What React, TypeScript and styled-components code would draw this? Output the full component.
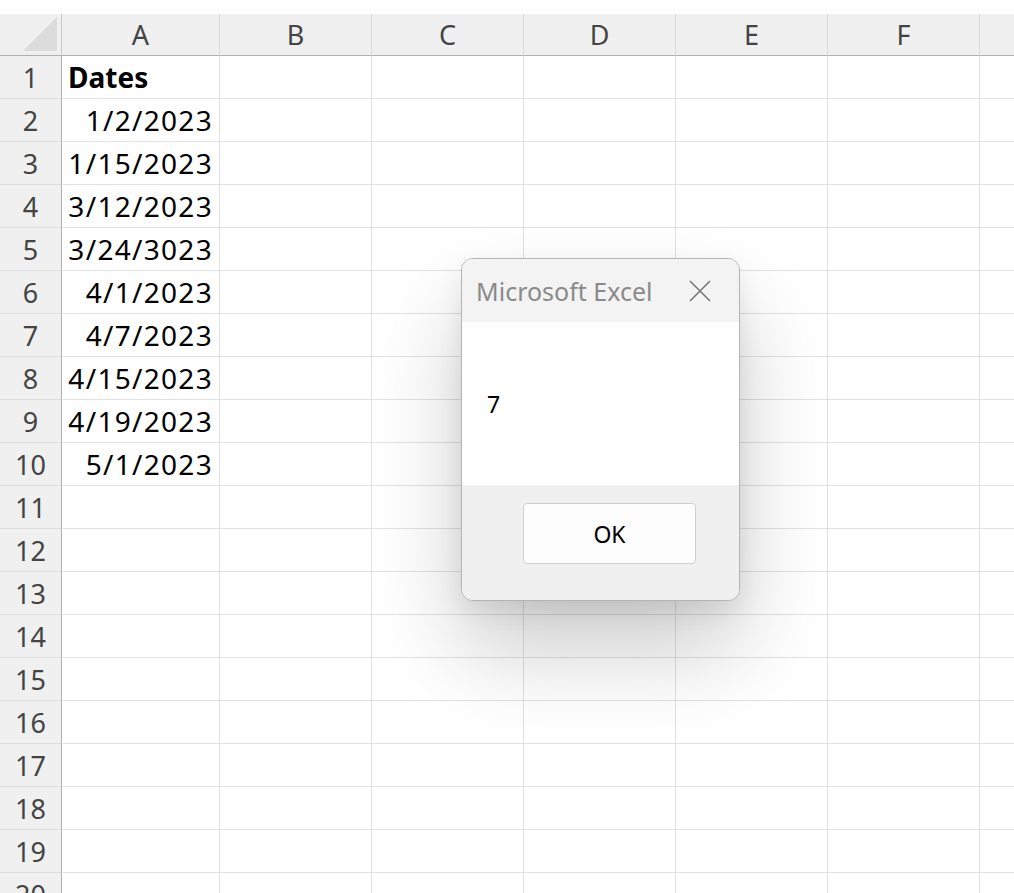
import * as React from 'react';
import styled, { createGlobalStyle } from 'styled-components';

const Global = createGlobalStyle`
  html, body { margin: 0; padding: 0; background: #fff; overflow: hidden; }
  body { font-family: "Noto Sans", "Open Sans", sans-serif; }
`;

const COLS = ['A', 'B', 'C', 'D', 'E', 'F', ''];
const WIDTHS = [62, 158, 152, 152, 152, 152, 152, 60];
const DATA = ['1/2/2023', '1/15/2023', '3/12/2023', '3/24/3023', '4/1/2023', '4/7/2023', '4/15/2023', '4/19/2023', '5/1/2023'];

const App = () => (
  <Page>
    <Global />
    <Sheet>
      <Corner><Triangle /></Corner>
      {COLS.map((c, i) => (
        <ColHead key={i}>{c}</ColHead>
      ))}
      {Array.from({ length: 20 }, (_, r) => (
        <React.Fragment key={r}>
          <RowHead>{r + 1}</RowHead>
          {COLS.map((_, c) => (
            <Cell key={c} $bold={r === 0} $right={r > 0}>
              {c === 0 ? (r === 0 ? 'Dates' : DATA[r - 1] ?? '') : ''}
            </Cell>
          ))}
        </React.Fragment>
      ))}
    </Sheet>

    <Dialog>
      <TitleBar>
        <Title>Microsoft Excel</Title>
        <svg width="22" height="22" viewBox="0 0 22 22">
          <path d="M1 1L21 21M21 1L1 21" stroke="#777" strokeWidth="1.6" />
        </svg>
      </TitleBar>
      <Body>7</Body>
      <Footer>
        <OkButton>OK</OkButton>
      </Footer>
    </Dialog>
  </Page>
);

const Page = styled.div`
  position: relative;
  width: 1014px;
  height: 893px;
  overflow: hidden;
`;

const Sheet = styled.div`
  display: grid;
  grid-template-columns: ${WIDTHS.map((w) => w + 'px').join(' ')};
  grid-template-rows: 42px repeat(20, 43px);
  padding-top: 14px;
  background: #fff;
`;

const Corner = styled.div`
  background: #f0f0f0;
  border-right: 1px solid #c8c8c8;
  border-bottom: 1px solid #b0b0b0;
  display: flex;
  align-items: flex-end;
  justify-content: flex-end;
  padding: 0 4px 4px 0;
`;

const Triangle = styled.div`
  width: 0;
  height: 0;
  border-left: 34px solid transparent;
  border-bottom: 34px solid #dcdcdc;
`;

const ColHead = styled.div`
  background: #f0f0f0;
  border-right: 1px solid #d8d8d8;
  border-bottom: 1px solid #b0b0b0;
  display: flex;
  align-items: center;
  justify-content: center;
  font-size: 27px;
  color: #444;
`;

const RowHead = styled.div`
  background: #f0f0f0;
  border-right: 1px solid #b0b0b0;
  border-bottom: 1px solid #dcdcdc;
  display: flex;
  align-items: center;
  justify-content: center;
  font-size: 27px;
  color: #444;
`;

const Cell = styled.div<{ $bold?: boolean; $right?: boolean }>`
  border-right: 1px solid #e1e1e1;
  border-bottom: 1px solid #e1e1e1;
  display: flex;
  align-items: center;
  justify-content: ${(p) => (p.$right ? 'flex-end' : 'flex-start')};
  padding: 0 6px;
  font-size: 28px;
  letter-spacing: ${(p) => (p.$right ? '1.3px' : '0')};
  font-weight: ${(p) => (p.$bold ? 700 : 400)};
  color: #000;
  white-space: nowrap;
`;

const Dialog = styled.div`
  position: absolute;
  left: 461px;
  top: 258px;
  width: 277px;
  height: 341px;
  border: 1px solid #b4b4b4;
  border-radius: 12px;
  background: #f0f0f0;
  overflow: hidden;
  display: flex;
  flex-direction: column;
  box-shadow: 0 50px 90px rgba(0, 0, 0, 0.2), 0 10px 24px rgba(0, 0, 0, 0.08);
`;

const TitleBar = styled.div`
  height: 63px;
  background: #f3f3f3;
  display: flex;
  align-items: center;
  justify-content: space-between;
  padding: 0 28px 0 14px;
`;

const Title = styled.span`
  font-size: 25px;
  color: #8a8a8a;
`;

const Body = styled.div`
  height: 163px;
  background: #fff;
  display: flex;
  align-items: center;
  padding-left: 25px;
  font-size: 23px;
  color: #000;
`;

const Footer = styled.div`
  flex: 1;
  background: #f0f0f0;
  display: flex;
  justify-content: center;
  padding-top: 18px;
`;

const OkButton = styled.button`
  width: 173px;
  height: 61px;
  margin-left: 18px;
  background: #fdfdfd;
  border: 1px solid #cfcfcf;
  border-radius: 4px;
  font-family: "Noto Sans", sans-serif;
  font-size: 23px;
  color: #000;
`;

export default App;
